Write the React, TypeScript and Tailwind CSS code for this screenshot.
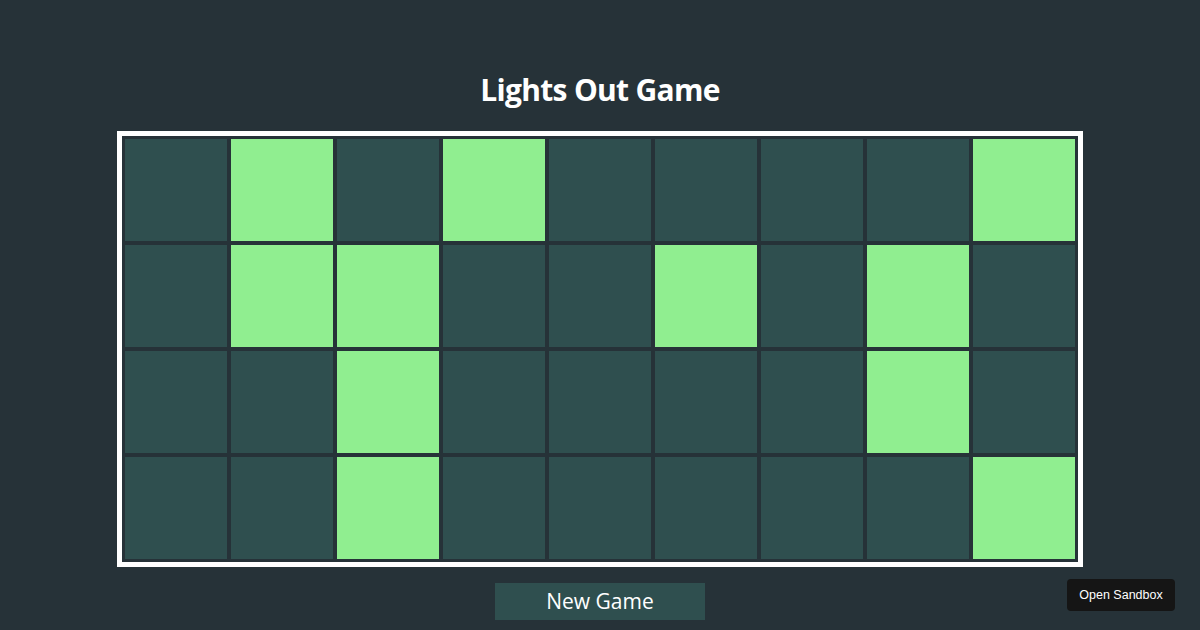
const board = [
  [0, 1, 0, 1, 0, 0, 0, 0, 1],
  [0, 1, 1, 0, 0, 1, 0, 1, 0],
  [0, 0, 1, 0, 0, 0, 0, 1, 0],
  [0, 0, 1, 0, 0, 0, 0, 0, 1],
]

export default function App() {
  return (
    <div className="w-[1200px] h-[630px] bg-[#263238] flex flex-col items-center overflow-hidden relative" style={{ fontFamily: '"Open Sans", "DejaVu Sans", sans-serif' }}>
      <h1 className="mt-[70px] h-[40px] leading-[40px] text-[30px] font-bold text-white tracking-[-0.7px]">
        Lights Out Game
      </h1>
      <div className="mt-[21px] border-[5px] border-white p-[3px] grid grid-cols-[repeat(9,102px)] gap-[4px]">
        {board.flat().map((lit, i) => (
          <div key={i} className={`w-[102px] h-[102px] ${lit ? 'bg-[#90ee90]' : 'bg-[#2f4f4f]'}`} />
        ))}
      </div>
      <button className="mt-[16px] w-[210px] h-[37px] bg-[#2f4f4f] text-white text-[21px] leading-[37px]">
        New Game
      </button>
      <div
        className="absolute right-[25px] bottom-[19px] w-[108px] h-[32px] rounded-[4px] bg-[#151515] text-white text-[12.5px] flex items-center justify-center"
        style={{ fontFamily: '"Liberation Sans", Arial, sans-serif' }}
      >
        Open Sandbox
      </div>
    </div>
  )
}
